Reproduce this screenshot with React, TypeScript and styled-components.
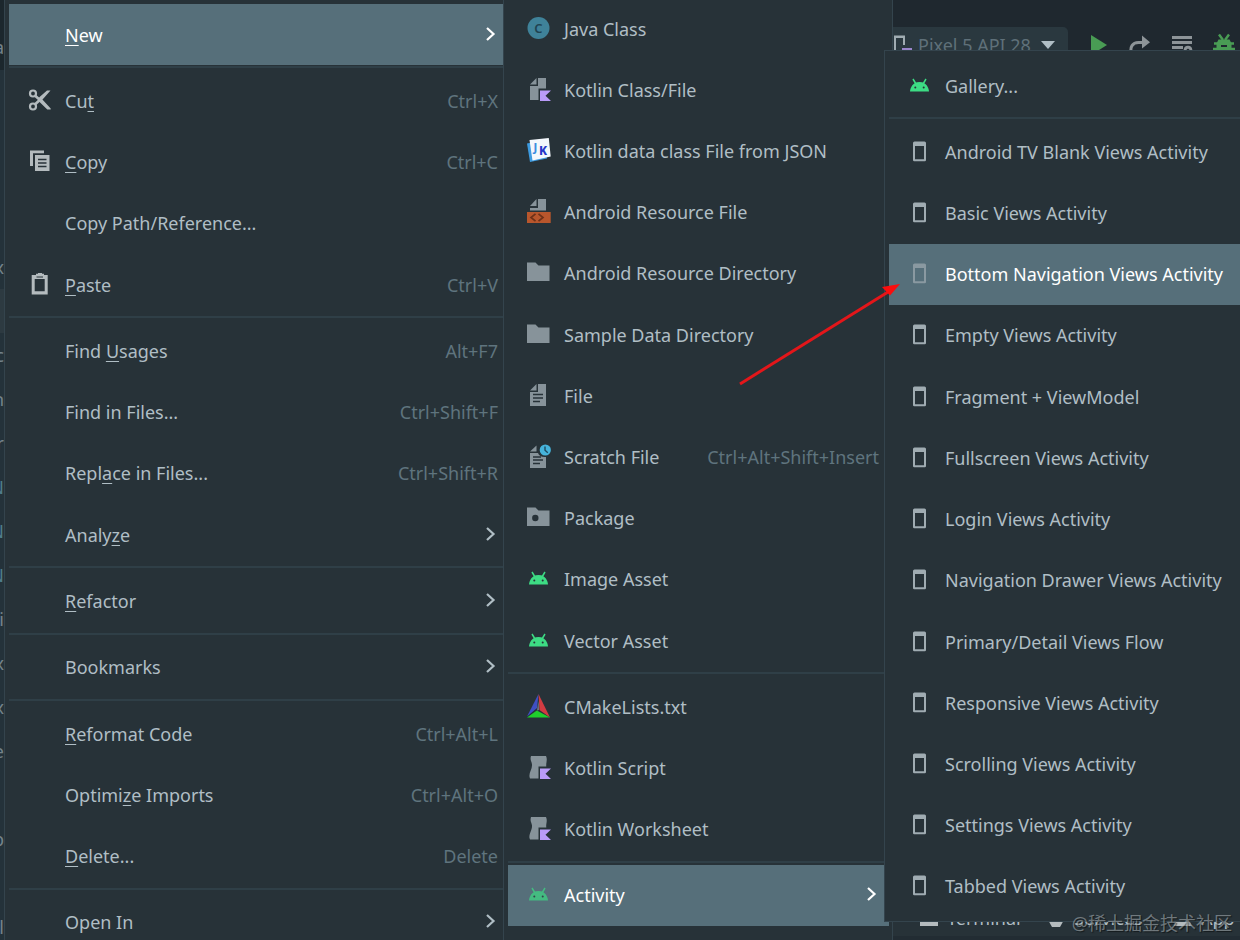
import React from "react";
import styled, { createGlobalStyle, css } from "styled-components";

const color = {
  menu: "#273238",
  edge: "#24323a",
  line: "#34444d",
  text: "#b0bec5",
  muted: "#5f747e",
  selected: "#566f7a",
  icon: "#87939a",
  bright: "#b4bbbe",
  green: "#3ddc84",
  kotlin: "#b99bf8",
  toolbar: "#1f282f",
};

const GlobalStyle = createGlobalStyle`
  *, *::before, *::after { box-sizing: border-box; }
  body {
    margin: 0;
    background: ${color.edge};
    font-family: "Noto Sans", "Noto Sans CJK SC", sans-serif;
    font-size: 18px;
    line-height: 24px;
    color: ${color.text};
  }
  button, select { font: inherit; color: inherit; }
`;

const Screen = styled.div`
  position: relative;
  display: grid;
  grid-template-columns: 4px minmax(0, 500fr) minmax(0, 389fr) minmax(0, 347fr);
  height: 100vh;
  min-height: 880px;
  overflow: hidden;
`;

/* Editor visible behind the menus */
const Gutter = styled.div`
  display: flex;
  flex-direction: column;
  overflow: hidden;
  padding-top: 25px;
  background: linear-gradient(#1c272d 70px, ${color.edge} 70px);
`;

const GutterLine = styled.span<{ $tint?: string; $active?: boolean }>`
  flex: 0 0 44px;
  display: flex;
  justify-content: flex-end;
  align-items: center;
  color: ${(p) => p.$tint ?? "#74838b"};
  background: ${(p) => (p.$active ? "#2d3a41" : "transparent")};
`;

const Menu = styled.div<{ $kind: "context" | "new" | "activity" }>`
  display: flex;
  flex-direction: column;
  background: ${color.menu};
  border: 0 solid ${color.line};
  ${(p) =>
    p.$kind === "context" &&
    css`
      height: calc(100% + 13px);
      padding: 4px 0 0 4px;
      border-width: 0 1px;
    `}
  ${(p) =>
    p.$kind === "new" &&
    css`
      margin-top: -2px;
      padding: 0 3px 14px 4px;
      border-right-width: 1px;
    `}
  ${(p) =>
    p.$kind === "activity" &&
    css`
      position: relative;
      flex: 1;
      margin-left: -9px;
      padding: 4px 0 4px 4px;
      border-width: 1px 0 1px 1px;
    `}
`;

const Item = styled.button<{ $selected?: boolean; $inset?: boolean }>`
  flex: 1 1 0;
  display: flex;
  align-items: center;
  gap: 13px;
  min-width: 0;
  border: 0;
  padding: 0 ${(p) => (p.$inset ? 10 : 5)}px 0 19px;
  text-align: left;
  white-space: nowrap;
  background: ${(p) => (p.$selected ? color.selected : "transparent")};
  color: ${(p) => (p.$selected ? "#fff" : color.text)};
`;

const IconBox = styled.span<{ $dim?: boolean }>`
  flex: none;
  width: 24px;
  height: 24px;
  margin-bottom: 2px;
  opacity: ${(p) => (p.$dim ? 0.7 : 1)};
  svg { display: block; }
`;

const Label = styled.span`
  flex: 1;
  u {
    text-decoration-thickness: 1px;
    text-underline-offset: 3px;
    text-decoration-skip-ink: none;
  }
`;

const Shortcut = styled.kbd`
  font: inherit;
  color: ${color.muted};
`;

const Chevron = styled.svg`
  flex: none;
  margin: 0 1px 2px 0;
`;

const Separator = styled.hr`
  flex: none;
  width: 100%;
  height: 2px;
  margin: 1px 0 2px;
  border: 0;
  background: #2f3f47;
`;

const Workspace = styled.div`
  display: flex;
  flex-direction: column;
  min-width: 0;
`;

const Toolbar = styled.div`
  flex: none;
  display: flex;
  height: 50px;
  padding-top: 27px;
  overflow: hidden;
  background: ${color.toolbar};
`;

const DevicePicker = styled.label`
  flex: none;
  display: flex;
  align-items: center;
  gap: 6px;
  width: 175px;
  height: 36px;
  border-radius: 0 5px 0 0;
  background: #2a383f;
  svg { flex: none; }
`;

const DeviceSelect = styled.select`
  appearance: none;
  width: 117px;
  padding: 0;
  border: 0;
  background: transparent;
  color: #5f7079;
`;

const ToolButton = styled.button`
  flex: none;
  height: 36px;
  width: 24px;
  margin-left: 18px;
  padding: 0;
  border: 0;
  background: transparent;
  svg { display: block; margin: auto; }
`;

const StatusBar = styled.div`
  flex: none;
  display: flex;
  align-items: flex-end;
  height: 18px;
  padding: 0 0 6px 27px;
  overflow: hidden;
  background: ${color.menu};
  border-bottom: 4px solid #222c33;
`;

const StatusTab = styled.button`
  flex: none;
  display: flex;
  align-items: center;
  gap: 9px;
  width: 127px;
  height: 24px;
  padding: 0;
  border: 0;
  background: transparent;
  white-space: nowrap;
`;

const Pointer = styled.svg`
  position: absolute;
  left: 736px;
  top: 280px;
  pointer-events: none;
`;

const Watermark = styled.span`
  position: absolute;
  right: 8px;
  bottom: 5px;
  color: rgba(190, 198, 202, 0.5);
  text-shadow: 1px 1px 1px rgba(0, 0, 0, 0.5);
  pointer-events: none;
`;

const Svg = ({ children }: { children: React.ReactNode }) => (
  <svg width="24" height="24" viewBox="0 0 24 24" fill="none" aria-hidden="true">
    {children}
  </svg>
);

const KotlinFlag = () => (
  <path d="M13 13.5h11l-5.5 5.2 5.5 5.3H13z" fill={color.kotlin} />
);

const icons = {
  cut: (
    <Svg>
      <g stroke={color.bright}>
        <circle cx="5" cy="5.5" r="3" strokeWidth="2.2" />
        <circle cx="5" cy="18.5" r="3" strokeWidth="2.2" />
        <path d="M7.2 7.8 13 13M7.2 16.2 13 10.8" strokeWidth="2.6" />
      </g>
      <path d="M11 9.5 19 2.5h3.5L13 13.2zM10 12.5l3-2.4 9.7 10.4v1h-3.4z" fill={color.bright} />
    </Svg>
  ),
  copy: (
    <Svg>
      <path d="M2 1.5h14v2.7H5V17H2z" fill={color.bright} />
      <path d="M7 6h14.5v16H7z" fill={color.bright} />
      <path d="M10 10.5h8.5M10 14h8.5M10 17.5h8.5" stroke={color.menu} strokeWidth="1.3" />
    </Svg>
  ),
  paste: (
    <Svg>
      <path
        d="M3.7 3h4.3V1.8h2V1h4v.8h2V3h3.7v19.5h-16zM6.7 7v12.300h10V7z"
        fill={color.bright}
        fillRule="evenodd"
      />
      <path d="M8.500 5h6.500" stroke={color.menu} strokeWidth="1" />
    </Svg>
  ),
  java: (
    <Svg>
      <circle cx="11.5" cy="12" r="11" fill="#3f8299" />
      <text x="11.500" y="16.500" fill="#1f4452" fontSize="13" fontWeight="600" textAnchor="middle">C</text>
    </Svg>
  ),
  kotlinFile: (
    <Svg>
      <path d="M11 1h8v10.500h-7.500V23H3V9h8z" fill={color.icon} />
      <path d="M9.500 1v6.500H3z" fill={color.icon} />
      <KotlinFlag />
    </Svg>
  ),
  json: (
    <Svg>
      <path d="M0 5.500 17 2l3 18.500L3 24z" fill="#3d9be0" />
      <path d="M2.500 2 21.800 0 23.700 18.500 5.500 22.500z" fill="#f3f7fc" />
      <text x="6.500" y="13" fill="#3b8ee0" fontSize="11" fontWeight="800">J</text>
      <text x="12" y="16.500" fill="#2638c8" fontSize="12" fontWeight="800">K</text>
    </Svg>
  ),
  resource: (
    <Svg>
      <path d="M11 0h8v11.500H3V9h8z" fill={color.icon} />
      <path d="M9.500 0v7H3z" fill={color.icon} />
      <path d="M0 13h23.700v11H0z" fill="#b8562c" />
      <path d="m8.500 14.800-4.500 3.700 4.500 3.700m3-7.400 4.500 3.700-4.500 3.700" stroke="#6d3118" strokeWidth="1.700" />
    </Svg>
  ),
  folder: (
    <Svg>
      <path d="M0 2.500h8.500l3 3h11V21H0z" fill={color.icon} />
    </Svg>
  ),
  package: (
    <Svg>
      <path d="M0 2.500h8.500l3 3h11V21H0z" fill={color.icon} />
      <circle cx="8.300" cy="13" r="3.200" fill={color.menu} />
    </Svg>
  ),
  file: (
    <Svg>
      <path d="M11 1h8v22H3V9h8z" fill={color.icon} />
      <path d="M9.500 1v6.500H3z" fill={color.icon} />
      <path d="M6 11.500h10M6 15h10M6 18.500h7" stroke={color.menu} strokeWidth="1.300" />
    </Svg>
  ),
  scratch: (
    <Svg>
      <path d="M11 9c1 3 4 4.500 8 4V24H3V9z" fill={color.icon} />
      <path d="M9.500 1.500v6H3z" fill={color.icon} />
      <path d="M6 13h8M6 16h10M6 19.500h7" stroke={color.menu} strokeWidth="1.300" />
      <circle cx="18.300" cy="6" r="5.600" fill="#46b4dc" />
      <path d="M18 2.500V6.300l2.800 2.500" stroke="#1f4b60" strokeWidth="1.400" />
    </Svg>
  ),
  android: (
    <Svg>
      <path d="M2 18.500c.4-4.500 3-8 7-9.200a10 10 0 0 1 5 0c4 1.200 6.600 4.700 7 9.200z" fill={color.green} />
      <path d="m5 6 2.700 4.500M18 6l-2.700 4.500" stroke={color.green} strokeWidth="1.500" />
      <circle cx="7.300" cy="14.500" r="1" fill={color.menu} />
      <circle cx="15.700" cy="14.500" r="1" fill={color.menu} />
    </Svg>
  ),
  cmake: (
    <Svg>
      <path d="M11.500 0 10 14 0 22.500z" fill="#3f4fc4" />
      <path d="M11.500 0 23 23.500 12.500 16z" fill="#d23c42" />
      <path d="M9.800 16.500 23 23.500H0z" fill="#1fd02c" />
      <path d="m11.500 7 .5 9-2 .5z" fill="#6f7890" />
    </Svg>
  ),
  script: (
    <Svg>
      <path d="M4 1h15c1.800 4-.2 6.500.3 10.500h-7.800V23.500H3c-2.200-5 2.500-9 2-14C4.700 6.500 2.700 5 4 1z" fill={color.icon} />
      <KotlinFlag />
    </Svg>
  ),
  phone: (
    <Svg>
      <path d="M5 4A1.500 1.500 0 0 1 6.500 2.500h10A1.500 1.500 0 0 1 18 4v17a1.200 1.200 0 0 1-1.200 1.200H6.200A1.200 1.200 0 0 1 5 21zM7 7v13.200h9V7z" fill="#a0acb2" fillRule="evenodd" />
    </Svg>
  ),
};

type Entry = {
  label: React.ReactNode;
  icon?: keyof typeof icons;
  keys?: string;
  sub?: boolean;
  selected?: boolean;
};

const contextGroups: Entry[][] = [
  [{ label: <><u>N</u>ew</>, sub: true, selected: true }],
  [
    { label: <>Cu<u>t</u></>, icon: "cut", keys: "Ctrl+X" },
    { label: <><u>C</u>opy</>, icon: "copy", keys: "Ctrl+C" },
    { label: "Copy Path/Reference..." },
    { label: <><u>P</u>aste</>, icon: "paste", keys: "Ctrl+V" },
  ],
  [
    { label: <>Find <u>U</u>sages</>, keys: "Alt+F7" },
    { label: "Find in Files...", keys: "Ctrl+Shift+F" },
    { label: <>Repl<u>a</u>ce in Files...</>, keys: "Ctrl+Shift+R" },
    { label: <>Analy<u>z</u>e</>, sub: true },
  ],
  [{ label: <><u>R</u>efactor</>, sub: true }],
  [{ label: "Bookmarks", sub: true }],
  [
    { label: <><u>R</u>eformat Code</>, keys: "Ctrl+Alt+L" },
    { label: <>Optimi<u>z</u>e Imports</>, keys: "Ctrl+Alt+O" },
    { label: <><u>D</u>elete...</>, keys: "Delete" },
  ],
  [{ label: "Open In", sub: true }],
];

const newGroups: Entry[][] = [
  [
    { label: "Java Class", icon: "java" },
    { label: "Kotlin Class/File", icon: "kotlinFile" },
    { label: "Kotlin data class File from JSON", icon: "json" },
    { label: "Android Resource File", icon: "resource" },
    { label: "Android Resource Directory", icon: "folder" },
    { label: "Sample Data Directory", icon: "folder" },
    { label: "File", icon: "file" },
    { label: "Scratch File", icon: "scratch", keys: "Ctrl+Alt+Shift+Insert" },
    { label: "Package", icon: "package" },
    { label: "Image Asset", icon: "android" },
    { label: "Vector Asset", icon: "android" },
  ],
  [
    { label: "CMakeLists.txt", icon: "cmake" },
    { label: "Kotlin Script", icon: "script" },
    { label: "Kotlin Worksheet", icon: "script" },
  ],
  [{ label: "Activity", icon: "android", sub: true, selected: true }],
];

const activityGroups: Entry[][] = [
  [{ label: "Gallery...", icon: "android" }],
  [
    "Android TV Blank Views Activity",
    "Basic Views Activity",
    "Bottom Navigation Views Activity",
    "Empty Views Activity",
    "Fragment + ViewModel",
    "Fullscreen Views Activity",
    "Login Views Activity",
    "Navigation Drawer Views Activity",
    "Primary/Detail Views Flow",
    "Responsive Views Activity",
    "Scrolling Views Activity",
    "Settings Views Activity",
    "Tabbed Views Activity",
  ].map((label) => ({
    label,
    icon: "phone" as const,
    selected: label.startsWith("Bottom"),
  })),
];

const MenuItems = ({ groups, inset }: { groups: Entry[][]; inset?: boolean }) => (
  <>
    {groups.map((group, g) => (
      <React.Fragment key={g}>
        {g > 0 && <Separator />}
        {group.map((entry, i) => (
          <Item key={i} role="menuitem" $selected={entry.selected} $inset={inset}>
            <IconBox $dim={entry.selected}>{entry.icon && icons[entry.icon]}</IconBox>
            <Label>{entry.label}</Label>
            {entry.keys && <Shortcut>{entry.keys}</Shortcut>}
            {entry.sub && (
              <Chevron width="12" height="16" viewBox="0 0 12 16" fill="none" aria-hidden="true">
                <path d="m2 2 6.500 6L2 14" stroke={entry.selected ? "#fff" : color.text} strokeWidth="2.200" />
              </Chevron>
            )}
          </Item>
        ))}
      </React.Fragment>
    ))}
  </>
);

const gutterText = ["a", "", "", "", "", "x", "", "c", "h", "r", "N", "N", "N", "i", "x", "x", "e", "", "b", "", "l"];

export default function App() {
  return (
    <>
      <GlobalStyle />
      <Screen>
        <Gutter aria-hidden="true">
          {gutterText.map((char, i) => (
            <GutterLine key={i} $active={i === 6} $tint={char === "N" ? "#4f7d8c" : undefined}>
              {char}
            </GutterLine>
          ))}
        </Gutter>
        <Menu role="menu" aria-label="Context" $kind="context">
          <MenuItems groups={contextGroups} />
        </Menu>
        <Menu role="menu" aria-label="New" $kind="new">
          <MenuItems groups={newGroups} inset />
        </Menu>
        <Workspace>
          <Toolbar>
            <DevicePicker>
              <svg width="19" height="24" viewBox="0 0 19 24" fill="none" aria-hidden="true">
                <path d="M2 20V3.500h9V12M1 4h11" stroke="#a0acb2" strokeWidth="2" />
                <path d="M10 16h8v5h-8z" stroke="#9a86cc" strokeWidth="2" />
              </svg>
              <DeviceSelect aria-label="Device">
                <option>Pixel 5 API 28</option>
              </DeviceSelect>
              <svg width="14" height="8" viewBox="0 0 14 8" aria-hidden="true">
                <path d="M0 0h14L7 8z" fill="#b0bec5" />
              </svg>
            </DevicePicker>
            <ToolButton aria-label="Run">
              <svg width="18" height="20" viewBox="0 0 18 20"><path d="M2 0v20L18 10z" fill="#499c54" /></svg>
            </ToolButton>
            <ToolButton aria-label="Apply changes">
              <svg width="24" height="24" viewBox="0 0 24 24" fill="none">
                <path d="M3.500 21c-2-7 1-11.500 7-11.500h4" stroke="#8d9498" strokeWidth="3" />
                <path d="m14 2.500 8 6.700-8 6.300zM13 24l3-7 3 7z" fill="#8d9498" />
              </svg>
            </ToolButton>
            <ToolButton aria-label="Apply code changes">
              <svg width="22" height="24" viewBox="0 0 22 24" fill="none">
                <path d="M1 4.500h20M1 9.500h20M1 14.500h11M14 18c0-5 6-5 6 0" stroke="#8d9498" strokeWidth="2.800" />
              </svg>
            </ToolButton>
            <ToolButton aria-label="Debug">
              <svg width="22" height="26" viewBox="0 0 22 26" fill="none">
                <path d="M5.500 7.500h11l2 4v7l-4 6h-7l-4-6v-7z" fill="#499c54" />
                <path d="M6 2.500l4 5.500M16 2.500 12 8M1 11.500h20M0 17h22" stroke="#499c54" strokeWidth="2.400" />
                <path d="M8 14h6M8 19h6" stroke={color.toolbar} strokeWidth="1.800" />
              </svg>
            </ToolButton>
          </Toolbar>
          <Menu role="menu" aria-label="Activity" $kind="activity">
            <MenuItems groups={activityGroups} />
          </Menu>
          <StatusBar>
            <StatusTab>
              <svg width="18" height="16" viewBox="0 0 18 16"><path d="M0 0h18v16H0z" fill={color.bright} /></svg>
              Terminal
            </StatusTab>
            <StatusTab>
              <svg width="18" height="18" viewBox="0 0 18 18"><path d="M5 0h8l5 9-5 9H5L0 9z" fill={color.bright} /></svg>
              Services
            </StatusTab>
            <StatusTab>
              <svg width="18" height="16" viewBox="0 0 18 16"><path d="M9 0h6v10l3 6H0l3-6z" fill={color.bright} /></svg>
              App
            </StatusTab>
          </StatusBar>
        </Workspace>
        <Pointer width="168" height="108" viewBox="0 0 168 108" aria-hidden="true">
          <path d="M4 104 152 12" stroke="#e3161a" strokeWidth="3" />
          <path d="M164 4 154 15.500 146 7z" fill="#fb0d0d" />
        </Pointer>
        <Watermark>@稀土掘金技术社区</Watermark>
      </Screen>
    </>
  );
}
